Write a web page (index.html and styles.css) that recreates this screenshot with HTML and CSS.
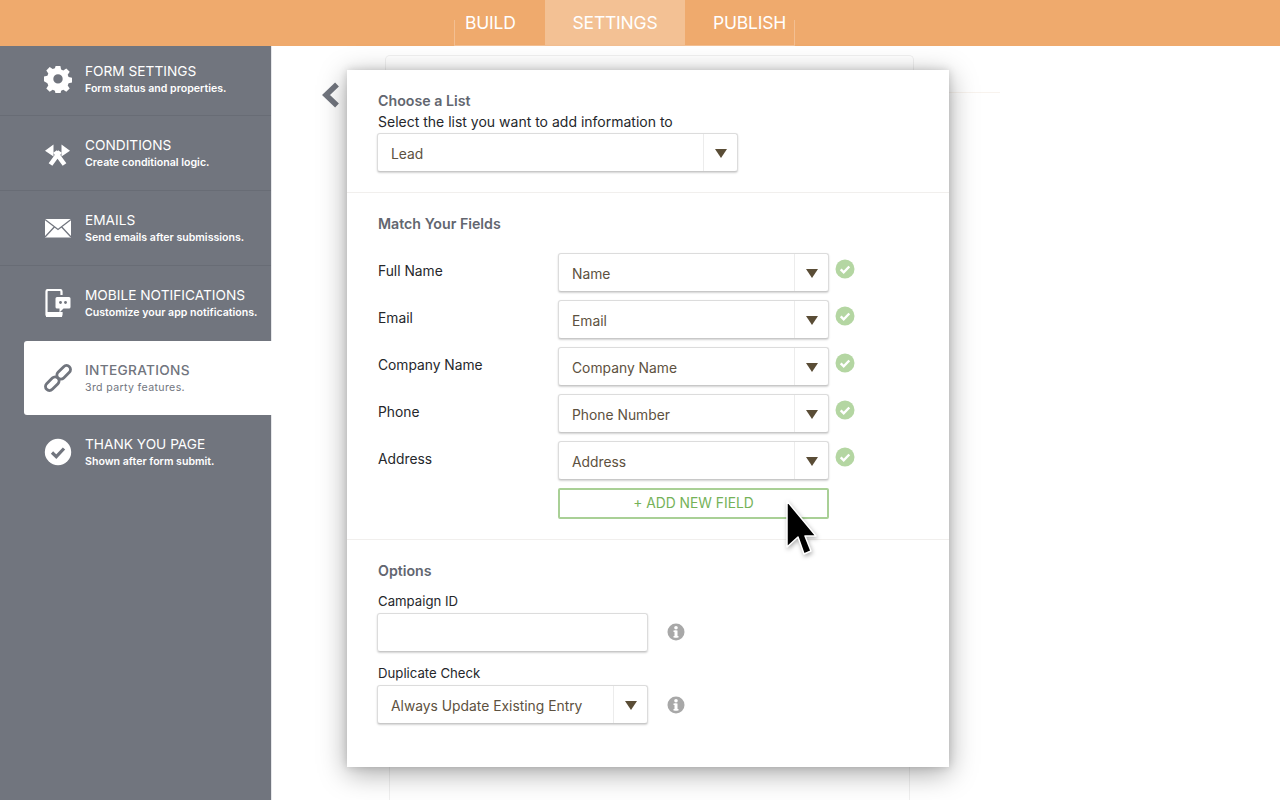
FILE: index.html
```html
<!DOCTYPE html>
<html>

  <head>
    <link rel="stylesheet" href="styles.css">
  </head>

  <body>
    <div class="topbar">
      <div class="tabs">
        <a class="tab tab-build">BUILD</a>
        <a class="tab tab-settings">SETTINGS</a>
        <a class="tab tab-publish">PUBLISH</a>
      </div>
    </div>

    <div class="page">
      <div class="sidebar">
        <div class="menu-item menu-item-first">
          <svg class="menu-icon" viewBox="0 0 28 28"><path fill="#fff" fill-rule="evenodd" d="M11.6 1h4.8l.7 3.500 2.200.9 3-2 3.400 3.400-2 3 .9 2.200 3.400.7v4.800l-3.400.7-.9 2.200 2 3-3.400 3.400-3-2-2.200.9-.7 3.300h-4.800l-.7-3.300-2.200-.9-3 2-3.400-3.400 2-3-.9-2.200L0 16.200v-4.800l3.400-.7.9-2.200-2-3 3.400-3.400 3 2 2.200-.9zM14 9.200a4.700 4.700 0 1 0 0 9.400 4.700 4.700 0 0 0 0-9.400z"/></svg>
          <div class="menu-text">
            <div class="menu-title">FORM SETTINGS</div>
            <div class="menu-sub">Form status and properties.</div>
          </div>
        </div>
        <div class="menu-item">
          <svg class="menu-icon" viewBox="0 0 28 28"><path fill="none" stroke="#fff" stroke-width="4.600" d="M6.500 25.500 16 12.500M20.500 25.500 11 12.500"/><path fill="#fff" d="M17.500 5.500 26 11.700 17.500 17.500zM9.500 5.500 1 11.700 9.500 17.500z"/></svg>
          <div class="menu-text">
            <div class="menu-title">CONDITIONS</div>
            <div class="menu-sub">Create conditional logic.</div>
          </div>
        </div>
        <div class="menu-item">
          <svg class="menu-icon" viewBox="0 0 28 28"><rect x="1" y="5" width="26" height="18.500" fill="#fff"/><path fill="none" stroke="#71757e" stroke-width="1.300" d="M1 5.500 14 15.500 27 5.500M1 23 10.500 12.800M27 23 17.500 12.800"/></svg>
          <div class="menu-text">
            <div class="menu-title">EMAILS</div>
            <div class="menu-sub">Send emails after submissions.</div>
          </div>
        </div>
        <div class="menu-item menu-item-before">
          <svg class="menu-icon" viewBox="0 0 28 28"><path fill="none" stroke="#fff" stroke-width="2.200" d="M17.500 6V2.500a1.500 1.500 0 0 0-1.500-1.500H4A1.500 1.500 0 0 0 2.500 2.500V26a1.500 1.500 0 0 0 1.500 1H16a1.500 1.500 0 0 0 1.500-1.500V23"/><path fill="#fff" d="M2 23h16v5H2z"/><path fill="#fff" d="M13 8h12a1.500 1.500 0 0 1 1.500 1.500V18a1.500 1.500 0 0 1-1.500 1.500h-5.500L15.500 23.500v-4H13a1.500 1.500 0 0 1-1.500-1.500V9.500A1.500 1.500 0 0 1 13 8z"/><circle cx="16.500" cy="13.500" r="1.400" fill="#71757e"/><circle cx="21.500" cy="13.500" r="1.400" fill="#71757e"/></svg>
          <div class="menu-text">
            <div class="menu-title">MOBILE NOTIFICATIONS</div>
            <div class="menu-sub">Customize your app notifications.</div>
          </div>
        </div>
        <div class="menu-item menu-item-active">
          <svg class="menu-icon" viewBox="0 0 28 28"><g fill="none" stroke="#71757e" stroke-width="2.800"><rect x="-8" y="-4" width="16" height="8" rx="4" transform="translate(8.300 19.700) rotate(-45)"/><rect x="-8" y="-4" width="16" height="8" rx="4" transform="translate(19.700 8.300) rotate(-45)"/></g></svg>
          <div class="menu-text">
            <div class="menu-title">INTEGRATIONS</div>
            <div class="menu-sub">3rd party features.</div>
          </div>
        </div>
        <div class="menu-item menu-item-after">
          <svg class="menu-icon" viewBox="0 0 28 28"><circle cx="14" cy="14" r="13.200" fill="#fff"/><path fill="none" stroke="#71757e" stroke-width="3.200" d="M8 14.500l4.300 4.200L20 10.500"/></svg>
          <div class="menu-text">
            <div class="menu-title">THANK YOU PAGE</div>
            <div class="menu-sub">Shown after form submit.</div>
          </div>
        </div>
      </div>

      <div class="content">
        <div class="form-head"></div>
        <div class="form-body"></div>
        <div class="form-line"></div>
        <svg class="back-arrow" viewBox="0 0 20 26"><path fill="none" stroke="#71757e" stroke-width="5.500" d="M17 2.500 6 13l11 10.500"/></svg>

        <div class="panel">
          <div class="panel-section section-list">
            <div class="section-title">Choose a List</div>
            <div class="field-label label-list">Select the list you want to add information to</div>
            <div class="dropdown dropdown-list">
              <span class="dropdown-value">Lead</span>
              <span class="dropdown-arrow"></span>
            </div>
          </div>

          <div class="panel-section section-match">
            <div class="section-title match-title">Match Your Fields</div>

            <div class="match-row">
              <div class="match-label">Full Name</div>
              <div class="dropdown dropdown-match">
                <span class="dropdown-value">Name</span>
                <span class="dropdown-arrow"></span>
              </div>
              <svg class="check-icon" viewBox="0 0 20 20"><circle cx="10" cy="10" r="9.500" fill="#b4d6a2"/><path fill="none" stroke="#fff" stroke-width="2.400" d="M5.700 10.300l3 3 5.600-5.800"/></svg>
            </div>
            <div class="match-row">
              <div class="match-label">Email</div>
              <div class="dropdown dropdown-match">
                <span class="dropdown-value">Email</span>
                <span class="dropdown-arrow"></span>
              </div>
              <svg class="check-icon" viewBox="0 0 20 20"><circle cx="10" cy="10" r="9.500" fill="#b4d6a2"/><path fill="none" stroke="#fff" stroke-width="2.400" d="M5.700 10.300l3 3 5.600-5.800"/></svg>
            </div>
            <div class="match-row">
              <div class="match-label">Company Name</div>
              <div class="dropdown dropdown-match">
                <span class="dropdown-value">Company Name</span>
                <span class="dropdown-arrow"></span>
              </div>
              <svg class="check-icon" viewBox="0 0 20 20"><circle cx="10" cy="10" r="9.500" fill="#b4d6a2"/><path fill="none" stroke="#fff" stroke-width="2.400" d="M5.700 10.300l3 3 5.600-5.800"/></svg>
            </div>
            <div class="match-row">
              <div class="match-label">Phone</div>
              <div class="dropdown dropdown-match">
                <span class="dropdown-value">Phone Number</span>
                <span class="dropdown-arrow"></span>
              </div>
              <svg class="check-icon" viewBox="0 0 20 20"><circle cx="10" cy="10" r="9.500" fill="#b4d6a2"/><path fill="none" stroke="#fff" stroke-width="2.400" d="M5.700 10.300l3 3 5.600-5.800"/></svg>
            </div>
            <div class="match-row">
              <div class="match-label">Address</div>
              <div class="dropdown dropdown-match">
                <span class="dropdown-value">Address</span>
                <span class="dropdown-arrow"></span>
              </div>
              <svg class="check-icon" viewBox="0 0 20 20"><circle cx="10" cy="10" r="9.500" fill="#b4d6a2"/><path fill="none" stroke="#fff" stroke-width="2.400" d="M5.700 10.300l3 3 5.600-5.800"/></svg>
            </div>

            <div class="add-field">+ ADD NEW FIELD</div>
          </div>

          <div class="panel-section section-options">
            <div class="section-title">Options</div>
            <div class="field-label label-campaign">Campaign ID</div>
            <div class="option-row">
              <div class="text-input"></div>
              <svg class="info-icon info-icon-top" viewBox="0 0 18 18"><circle cx="9" cy="9" r="8.500" fill="#a8a8a8"/><rect x="7.500" y="7.500" width="3" height="7" fill="#fff"/><rect x="6.500" y="7.500" width="3" height="1.500" fill="#fff"/><rect x="6.500" y="13" width="5" height="1.500" fill="#fff"/><circle cx="9" cy="4.800" r="1.800" fill="#fff"/></svg>
            </div>
            <div class="field-label label-duplicate">Duplicate Check</div>
            <div class="option-row">
              <div class="dropdown dropdown-option">
                <span class="dropdown-value">Always Update Existing Entry</span>
                <span class="dropdown-arrow"></span>
              </div>
              <svg class="info-icon" viewBox="0 0 18 18"><circle cx="9" cy="9" r="8.500" fill="#a8a8a8"/><rect x="7.500" y="7.500" width="3" height="7" fill="#fff"/><rect x="6.500" y="7.500" width="3" height="1.500" fill="#fff"/><rect x="6.500" y="13" width="5" height="1.500" fill="#fff"/><circle cx="9" cy="4.800" r="1.800" fill="#fff"/></svg>
            </div>
          </div>
        </div>

        <svg class="cursor" viewBox="-2 -2 34 60"><path fill="#000" stroke="#fff" stroke-width="1.500" stroke-linejoin="round" d="M0 0V46L11 36 17 53 24 50 18 35H29Z"/></svg>
      </div>
    </div>
  </body>

</html>
```

FILE: styles.css
```css
body {
  margin: 0;
  height: 800px;
  overflow: hidden;
  font-family: Inter, "Liberation Sans", sans-serif;
  background-color: #fff;
}

.topbar {
  height: 46px;
  background-color: #efaa6d;
  display: flex;
  justify-content: center;
  padding-right: 31px;
}

.tabs {
  display: flex;
  height: 45px;
  border-bottom: 1px solid #f3bf92;
}

.tab {
  font-size: 17.500px;
  color: #fff;
  line-height: 46px;
  letter-spacing: -0.2px;
  position: relative;
}

.tab-build {
  width: 80px;
  padding-left: 11px;
}

.tab-build::before,
.tab-publish::after {
  content: "";
  position: absolute;
  bottom: 0;
  width: 1px;
  height: 25px;
  background-color: #f3bf92;
}

.tab-build::before {
  left: 0;
}

.tab-publish::after {
  right: 0;
}

.tab-settings {
  width: 140px;
  background-color: #f3c194;
  text-align: center;
}

.tab-publish {
  width: 82px;
  padding-left: 28px;
}

.page {
  display: flex;
  height: 754px;
}

.sidebar {
  width: 271px;
  flex-shrink: 0;
  background-color: #71757e;
  border-right: 1px solid #e6e7ea;
}

.menu-item {
  height: 65px;
  padding: 10px 0 0 44px;
  display: flex;
  align-items: flex-start;
  border-bottom: 1px solid #686c75;
  margin-bottom: -1px;
  color: #fff;
}

.menu-item-first {
  height: 64px;
  padding-top: 5px;
}

.menu-item-before {
  border-bottom: none;
  height: 67px;
  border-radius: 0 0 3px 0;
}

.menu-item-active {
  height: 65px;
  margin: 0 -1px -1px 24px;
  padding-top: 9px;
  padding-left: 20px;
  background-color: #fff;
  color: #71757e;
  border-bottom: none;
  border-radius: 3px 0 0 3px;
}

.menu-item-after {
  border-bottom: none;
}

.menu-icon {
  width: 28px;
  height: 28px;
  margin-top: 14px;
  flex-shrink: 0;
}

.menu-text {
  margin-left: 13px;
  padding-top: 11px;
}

.menu-title {
  font-size: 13.700px;
  line-height: 18px;
}

.menu-sub {
  font-size: 10.600px;
  font-weight: 600;
  line-height: 16px;
  margin-top: 1px;
}

.menu-item-active .menu-title {
  font-weight: 500;
  letter-spacing: 0.3px;
}

.menu-item-active .menu-sub {
  font-weight: 400;
  letter-spacing: 0.35px;
}

.content {
  flex: 1;
  position: relative;
}

.form-head {
  position: absolute;
  left: 113px;
  top: 9px;
  width: 527px;
  height: 40px;
  border: 1px solid #f0f0f0;
  border-bottom: none;
  border-radius: 5px 5px 0 0;
}

.form-body {
  position: absolute;
  left: 117px;
  top: 700px;
  width: 519px;
  height: 60px;
  border-left: 1px solid #f0f0f0;
  border-right: 1px solid #f0f0f0;
}

.form-line {
  position: absolute;
  left: 600px;
  top: 46px;
  width: 128px;
  height: 1px;
  background-color: #f8f3ee;
}

.back-arrow {
  position: absolute;
  left: 48px;
  top: 36px;
  width: 20px;
  height: 26px;
}

.panel {
  position: absolute;
  left: 75px;
  top: 24px;
  width: 602px;
  height: 697px;
  background-color: #fff;
  box-shadow: 0 6px 26px rgba(0, 0, 0, 0.35), 0 0 8px rgba(0, 0, 0, 0.15);
}

.panel-section {
  padding: 0 30px;
  border-bottom: 1px solid #f1efed;
}

.section-list {
  height: 123px;
  padding-top: 22px;
  box-sizing: border-box;
}

.section-match {
  height: 347px;
  padding-top: 22px;
  box-sizing: border-box;
}

.section-options {
  border-bottom: none;
  padding-top: 22px;
}

.section-title {
  font-size: 14.200px;
  font-weight: 600;
  color: #62666f;
  line-height: 17px;
  padding-left: 1px;
}

.field-label {
  font-size: 14px;
  color: #25272b;
  line-height: 17px;
  padding-left: 1px;
}

.label-list {
  margin-top: 4px;
}

.match-title {
  margin-bottom: 21px;
}

.dropdown {
  display: flex;
  align-items: center;
  height: 37px;
  background-color: #fff;
  border: 1px solid #dcdcdc;
  border-bottom-color: #c8c8c8;
  border-radius: 3px;
  box-shadow: 0 1px 2px rgba(0, 0, 0, 0.18);
}

.dropdown-list {
  width: 359px;
  margin-top: 3px;
}

.dropdown-match {
  width: 269px;
}

.dropdown-option {
  width: 269px;
}

.dropdown-value {
  flex: 1;
  padding-left: 13px;
  font-size: 13.850px;
  color: #5d5140;
  padding-top: 2px;
}

.dropdown-arrow {
  width: 33px;
  height: 37px;
  border-left: 1px solid #ececec;
  position: relative;
}

.dropdown-arrow::after {
  content: "";
  position: absolute;
  left: 11px;
  top: 15px;
  border-left: 6px solid transparent;
  border-right: 6px solid transparent;
  border-top: 9px solid #5a4d36;
}

.match-row {
  display: flex;
  align-items: flex-start;
  height: 39px;
  margin-bottom: 8px;
}

.match-label {
  width: 180px;
  padding-left: 1px;
  font-size: 13.800px;
  color: #25272b;
  line-height: 17px;
  padding-top: 10px;
}

.check-icon {
  width: 20px;
  height: 20px;
  margin: 6px 0 0 6px;
}

.add-field {
  width: 267px;
  height: 27px;
  margin-left: 181px;
  border: 2px solid #a9d096;
  border-radius: 2px;
  font-size: 13.800px;
  line-height: 26px;
  text-align: center;
  color: #75b258;
}

.label-campaign {
  margin-top: 14px;
  margin-bottom: 3px;
  font-size: 13.200px;
}

.label-duplicate {
  margin-top: 13px;
  margin-bottom: 3px;
  font-size: 13.200px;
}

.option-row {
  display: flex;
  align-items: center;
}

.text-input {
  width: 269px;
  height: 37px;
  border: 1px solid #dcdcdc;
  border-bottom-color: #c8c8c8;
  border-radius: 3px;
  box-shadow: 0 1px 2px rgba(0, 0, 0, 0.18);
}

.info-icon {
  width: 18px;
  height: 18px;
  margin-left: 19px;
}

.info-icon-top {
  margin-bottom: 2px;
}

.cursor {
  position: absolute;
  left: 513px;
  top: 453px;
  width: 34px;
  height: 60px;
  filter: drop-shadow(1px 2px 2px rgba(0, 0, 0, 0.3));
}
```
